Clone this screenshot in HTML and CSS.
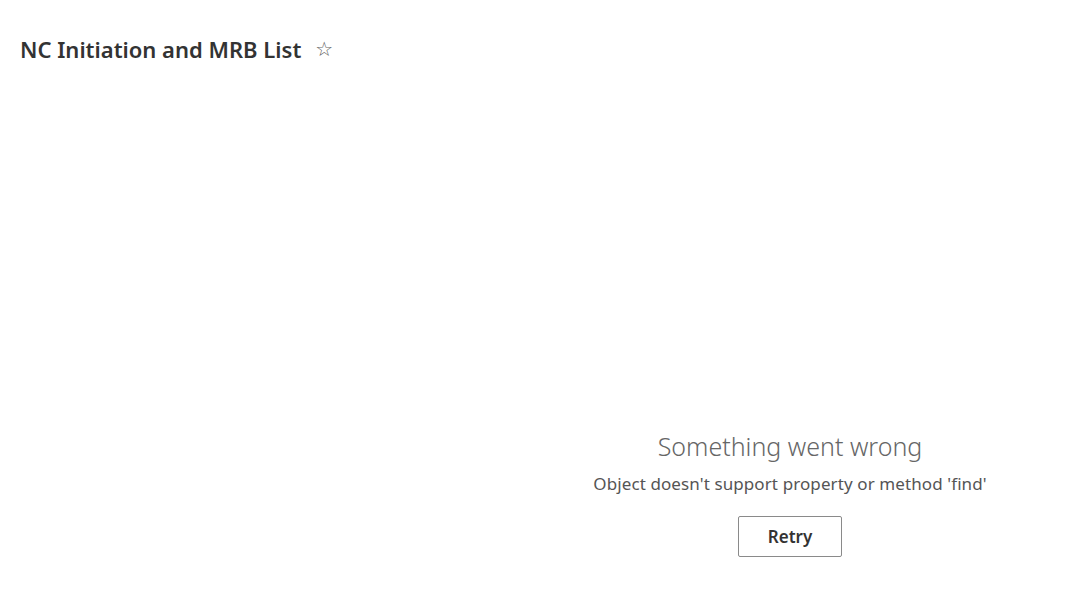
FILE: index.html
```html
<!DOCTYPE html>
<html>
<head>
<meta charset="utf-8">
<link rel="stylesheet" href="styles.css">
</head>
<body>
<div class="page">
  <header class="header">
    <h1 class="title">NC Initiation and MRB List</h1>
    <span class="star">☆</span>
  </header>
  <main class="main">
    <div class="spacer"></div>
    <section class="error">
      <div class="error-title">Something went wrong</div>
      <div class="error-msg">Object doesn't support property or method 'find'</div>
      <button class="retry">Retry</button>
    </section>
  </main>
</div>
</body>
</html>
```
FILE: styles.css
```css
html, body {
  margin: 0;
  padding: 0;
  background: #ffffff;
}
body {
  font-family: "Noto Sans", "Open Sans", sans-serif;
  color: #333333;
  width: 1074px;
  height: 605px;
  overflow: hidden;
}
.page {
  display: flex;
  flex-direction: column;
  height: 605px;
}
.header {
  display: flex;
  align-items: center;
  gap: 14px;
  padding: 33px 0 0 20px;
  height: 32px;
}
.title {
  margin: 0;
  font-size: 22px;
  font-weight: 600;
  color: #333333;
  letter-spacing: 0;
}
.star {
  font-size: 20px;
  color: #666666;
  font-family: "DejaVu Sans", sans-serif;
  line-height: 1;
}
.main {
  display: flex;
  flex: 1;
}
.spacer {
  width: 506px;
}
.error {
  flex: 1;
  display: flex;
  flex-direction: column;
  align-items: center;
  padding-top: 364px;
}
.error-title {
  font-size: 25px;
  font-weight: 300;
  color: #666666;
  line-height: 34px;
}
.error-msg {
  font-size: 17px;
  color: #555555;
  margin-top: 9px;
  line-height: 24px;
  letter-spacing: 0.1px;
}
.retry {
  margin-top: 20px;
  width: 104px;
  height: 41px;
  background: #ffffff;
  border: 1px solid #8a8a8a;
  border-radius: 2px;
  font-family: "Noto Sans", "Open Sans", sans-serif;
  font-size: 17px;
  font-weight: 600;
  color: #333333;
  padding: 0;
}
```
